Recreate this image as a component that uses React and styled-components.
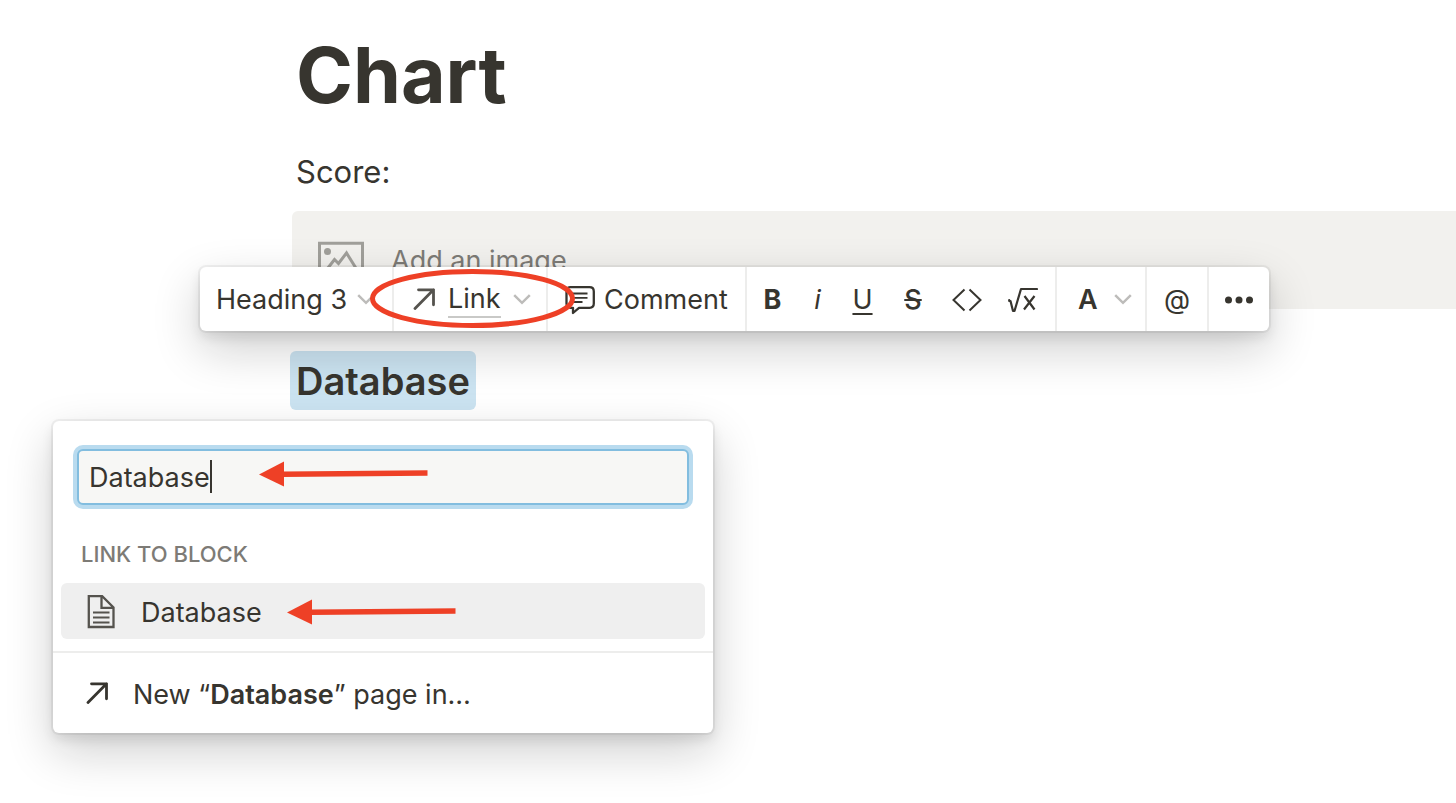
import React from "react";
import styled, { createGlobalStyle } from "styled-components";

const ink = "#37352f";
const red = "#ee4026";

const GlobalStyle = createGlobalStyle`
  * { box-sizing: border-box; }
  body {
    margin: 0;
    background: #fff;
    color: ${ink};
    font-family: Inter, "Liberation Sans", sans-serif;
  }
  button, input { font: inherit; color: inherit; }
`;

const Page = styled.main`
  min-height: 100vh;
  padding: 27px 0 0 292px;
  overflow: hidden;
`;

const Title = styled.h1`
  margin: 0;
  padding-left: 4px;
  font-size: 77px;
  line-height: 96px;
  font-weight: 700;
`;

const Paragraph = styled.p`
  margin: 25px 0 15px;
  padding-left: 4px;
  font-size: 31px;
  line-height: 48px;
`;

const ImageBlock = styled.button`
  display: flex;
  align-items: center;
  gap: 26px;
  width: 100%;
  height: 98px;
  padding: 0 25px;
  border: 0;
  border-radius: 6px 0 0 6px;
  background: #f2f1ee;
  color: #7d7b76;
  font-size: 27px;
  text-align: left;
`;

const HeadingBlock = styled.section`
  position: relative;
  width: fit-content;
  margin: 42px 0 0 -2px;
`;

const Heading = styled.h3`
  margin: 0;
  padding: 2px 6px 0;
  border-radius: 6px;
  background: #cbe3f1;
  font-size: 38px;
  line-height: 57px;
  font-weight: 600;
`;

const Popover = styled.div`
  position: absolute;
  border-radius: 6px;
  background: #fff;
  box-shadow: 0 0 0 2px rgba(15, 15, 15, 0.05),
    0 6px 12px rgba(15, 15, 15, 0.1), 0 18px 48px rgba(15, 15, 15, 0.2);
`;

const Toolbar = styled(Popover)`
  left: -90px;
  bottom: calc(100% + 20px);
  display: flex;
  height: 64px;
`;

const Group = styled.div`
  position: relative;
  display: flex;
  flex: none;
  width: ${(p) => p.$width}px;
  padding-left: ${(p) => p.$inset || 0}px;
  border-right: 2px solid #ededec;
  &:last-child { border-right: 0; }
`;

const Tool = styled.button`
  display: flex;
  flex: ${(p) => (p.$width ? "none" : "1")};
  align-items: center;
  justify-content: ${(p) => (p.$start ? "flex-start" : "center")};
  gap: ${(p) => p.$gap || 0}px;
  width: ${(p) => p.$width}px;
  padding: 1px 0 0 ${(p) => p.$start || 0}px;
  border: 0;
  background: none;
  font-size: 27px;
  line-height: 34px;
  font-weight: ${(p) => p.$weight || 400};
  font-style: ${(p) => (p.$italic ? "italic" : "normal")};
  text-decoration: ${(p) => p.$line || "none"};
  text-decoration-thickness: 2px;
  text-underline-offset: 4px;
  white-space: nowrap;
`;

const LinkText = styled.span`
  border-bottom: 2px solid #c9c9c7;
`;

const Menu = styled(Popover)`
  left: -237px;
  top: calc(100% + 11px);
  width: 660px;
  padding-bottom: 12px;
`;

const Field = styled.div`
  position: relative;
  margin: 28px 24px 32px;
`;

const SearchInput = styled.input`
  display: block;
  width: 100%;
  height: 56px;
  padding: 0 10px;
  border: 2px solid #82bddf;
  border-radius: 6px;
  outline: 0;
  background: #f7f7f5;
  box-shadow: 0 0 0 4px #b9dbef;
  caret-color: transparent;
  font-size: 27px;
`;

const Caret = styled.span`
  position: absolute;
  left: 133px;
  top: 11px;
  width: 2px;
  height: 33px;
  background: ${ink};
`;

const SectionLabel = styled.h4`
  margin: 0 28px 12px;
  color: #7d7b76;
  font-size: 22px;
  line-height: 34px;
  font-weight: 500;
`;

const MenuItem = styled.button`
  position: relative;
  display: flex;
  align-items: center;
  gap: ${(p) => p.$gap}px;
  width: calc(100% - 16px);
  height: 56px;
  margin: 0 8px;
  padding: 2px 24px 0;
  border: 0;
  border-radius: 6px;
  background: ${(p) => (p.$active ? "#efefef" : "none")};
  font-size: 27px;
  text-align: left;
  b { font-weight: 600; }
`;

const Divider = styled.hr`
  height: 2px;
  margin: 12px 0;
  border: 0;
  background: #ededec;
`;

const Icon = styled.svg`
  flex: none;
  fill: none;
  stroke: ${(p) => p.$color || ink};
  stroke-width: ${(p) => p.$stroke || 2};
`;

const Mark = styled.svg`
  position: absolute;
  z-index: 1;
  left: ${(p) => p.$left}px;
  top: ${(p) => p.$top}px;
  overflow: visible;
  pointer-events: none;
`;

const Chevron = () => (
  <Icon width="18" height="12" viewBox="0 0 18 12" $color="#bdbcba" $stroke={2.5}>
    <path d="M1.2 1.2 9 8.800 16.800 1.2" />
  </Icon>
);

const NorthEast = ({ color }) => (
  <Icon width="24" height="24" viewBox="0 0 24 24" $color={color} $stroke={2.800}>
    <path d="M6.500 1.800H21.500V16.800M21.500 1.800 3 20.500" strokeLinecap="round" strokeLinejoin="round" />
  </Icon>
);

const Arrow = ({ left, top }) => (
  <Mark $left={left} $top={top} width="170" height="26" viewBox="0 0 170 26" aria-hidden="true">
    <path d="M0 13.5 25 .5V25.500Z" fill={red} />
    <path d="M24 13.200 168.500 12" stroke={red} strokeWidth="5.500" />
  </Mark>
);

export default function App() {
  return (
    <>
      <GlobalStyle />
      <Page>
        <Title>Chart</Title>
        <Paragraph>Score:</Paragraph>
        <ImageBlock type="button">
          <Icon width="48" height="40" viewBox="0 0 48 40" $color="#a09f9a" $stroke={3}>
            <path d="M2.500 3.300H45.500V37H2.500Z" />
            <path d="M7 33 17.500 19.500 21.500 23.500 29.500 13 42 33" />
            <circle cx="10.500" cy="11.500" r="3.500" fill="#a09f9a" stroke="none" />
          </Icon>
          Add an image
        </ImageBlock>

        <HeadingBlock>
          <Heading>Database</Heading>

          <Toolbar role="toolbar" aria-label="Text formatting">
            <Group $width={194}>
              <Tool type="button" $start={16} $gap={10}>Heading 3 <Chevron /></Tool>
            </Group>
            <Group $width={154}>
              <Tool type="button" $start={18} $gap={12}>
                <NorthEast color="#55534e" />
                <LinkText>Link</LinkText>
                <Chevron />
              </Tool>
              <Mark $left={-24} $top={2} width="206" height="59" viewBox="0 0 206 59" aria-hidden="true">
                <ellipse cx="102.500" cy="29.500" rx="100" ry="27" fill="none" stroke={red} strokeWidth="5" />
              </Mark>
            </Group>
            <Group $width={199}>
              <Tool type="button" $start={17} $gap={8}>
                <Icon width="31" height="30" viewBox="0 0 31 30" $stroke={2.3}>
                  <path d="M5 2.200H24.500Q28.800 2.200 28.800 6.500V18.500Q28.800 22.800 24.500 22.800H14L8 28V22.800H5.500Q1.500 22.800 1.500 18.500V6.500Q1.500 2.200 5 2.200Z" strokeLinejoin="round" />
                  <path d="M7 8.500H22.500M7 12.800H22.500M7 17H17.500" strokeWidth="1.800" />
                </Icon>
                Comment
              </Tool>
            </Group>
            <Group $width={310} $inset={3}>
              <Tool type="button" $width={45} $weight={700}>B</Tool>
              <Tool type="button" $width={45} $italic>i</Tool>
              <Tool type="button" $width={45} $line="underline">U</Tool>
              <Tool type="button" $width={56} $weight={500} $line="line-through">S</Tool>
              <Tool type="button" $width={52} aria-label="Code">
                <Icon width="30" height="24" viewBox="0 0 30 24">
                  <path d="M12.500 1.500 1.500 12 12.500 22.500M17.500 1.500 28.500 12 17.500 22.500" />
                </Icon>
              </Tool>
              <Tool type="button" $width={60} aria-label="Equation">
                <Icon width="30" height="26" viewBox="0 0 30 26" $stroke={2.2}>
                  <path d="M1.200 13V14H2.500L5 24H6.500L13 2H29" strokeLinecap="round" strokeLinejoin="round" />
                  <path d="M16.500 9 26.500 22.500M26.500 9 16 22.500" />
                </Icon>
              </Tool>
            </Group>
            <Group $width={90}>
              <Tool type="button" $start={21} $gap={16} $weight={600}>A <Chevron /></Tool>
            </Group>
            <Group $width={62}>
              <Tool type="button">@</Tool>
            </Group>
            <Group $width={60}>
              <Tool type="button" aria-label="More">
                <Icon width="28" height="8" viewBox="0 0 28 8">
                  <g fill={ink} stroke="none">
                    <circle cx="3.500" cy="4" r="3.500" />
                    <circle cx="14" cy="4" r="3.500" />
                    <circle cx="24.500" cy="4" r="3.500" />
                  </g>
                </Icon>
              </Tool>
            </Group>
          </Toolbar>

          <Menu>
            <Field>
              <SearchInput type="text" aria-label="Link to page" defaultValue="Database" />
              <Caret />
              <Arrow left={182} top={12} />
            </Field>
            <SectionLabel>LINK TO BLOCK</SectionLabel>
            <MenuItem type="button" $active $gap={25}>
              <Icon width="31" height="34" viewBox="0 0 31 34" $color="#55534e" $stroke={2.3}>
                <path d="M3.800 1H17L28.500 12.500V32H3.800ZM16.500 1.500V12.800H28" />
                <path d="M8 17.500H24.500M8 22.500H24.500M8 27.500H24.500" strokeWidth="2.200" />
              </Icon>
              Database
              <Arrow left={226} top={16} />
            </MenuItem>
            <Divider />
            <MenuItem type="button" $gap={24}>
              <NorthEast />
              <span>New “<b>Database</b>” page in…</span>
            </MenuItem>
          </Menu>
        </HeadingBlock>
      </Page>
    </>
  );
}
